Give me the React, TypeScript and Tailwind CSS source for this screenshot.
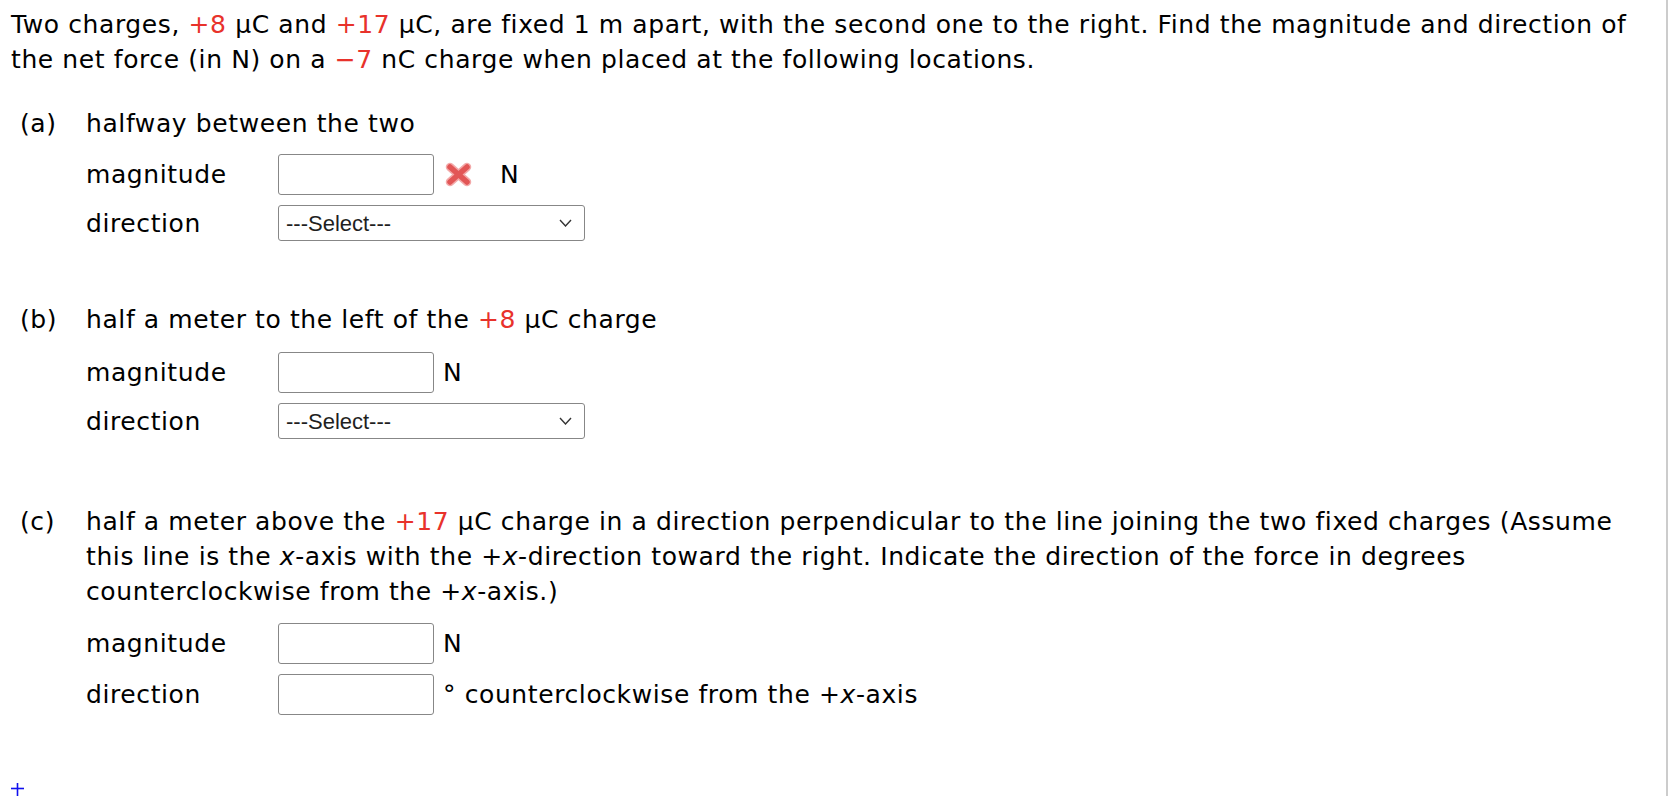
import React from 'react'

function Red({ children }: { children: React.ReactNode }): React.JSX.Element {
  return <span className="text-[#e8322b]">{children}</span>
}

function XMark(): React.JSX.Element {
  return (
    <svg width="27" height="25" viewBox="0 0 27 25" className="ml-[11px] shrink-0">
      <g strokeLinecap="round">
        <g stroke="#f3a9a9" strokeWidth="8.5">
          <line x1="5" y1="5" x2="22" y2="20" />
          <line x1="22" y1="5" x2="5" y2="20" />
        </g>
        <g stroke="#e25656" strokeWidth="5.5">
          <line x1="5" y1="5" x2="22" y2="20" />
          <line x1="22" y1="5" x2="5" y2="20" />
        </g>
      </g>
    </svg>
  )
}

function TextBox(): React.JSX.Element {
  return (
    <input
      type="text"
      className="w-[156px] h-[41px] shrink-0 border-[1.5px] border-[#878787] rounded-[3px] bg-white outline-none"
    />
  )
}

function SelectBox(): React.JSX.Element {
  return (
    <div className="relative w-[307px] h-[36px] shrink-0">
      <select className="w-full h-full appearance-none border-[1.5px] border-[#878787] rounded-[3px] bg-white pl-[7px] font-['Liberation_Sans',Arial,sans-serif] text-[22px] tracking-normal text-[#1f1f1f] outline-none">
        <option>---Select---</option>
      </select>
      <svg
        width="13"
        height="8"
        viewBox="0 0 13 8"
        className="absolute right-[13px] top-[14px] pointer-events-none"
      >
        <polyline points="1,1 6.5,7 12,1" fill="none" stroke="#333" strokeWidth="1.4" />
      </svg>
    </div>
  )
}

function Row({
  label,
  children,
  className
}: {
  label: string
  children: React.ReactNode
  className: string
}): React.JSX.Element {
  return (
    <div className={`flex items-center leading-[35px] ${className}`}>
      <span className="w-[192px] shrink-0">{label}</span>
      {children}
    </div>
  )
}

function Part({
  tag,
  className,
  children
}: {
  tag: string
  className: string
  children: React.ReactNode
}): React.JSX.Element {
  return (
    <section className={`flex ${className}`}>
      <div className="w-[66px] shrink-0 leading-[35px]">{tag}</div>
      <div className="flex-1">{children}</div>
    </section>
  )
}

export default function App(): React.JSX.Element {
  return (
    <div className="w-[1668px] h-[796px] overflow-hidden bg-white border-r-2 border-[#cccccc] font-['DejaVu_Sans',Verdana,sans-serif] text-[25px] tracking-[0.6px] text-black">
      <p className="pt-[7px] pl-[11px] leading-[35px] whitespace-nowrap">
        Two charges, <Red>+8</Red> μC and <Red>+17</Red> μC, are fixed 1 m apart, with the second
        one to the right. Find the magnitude and direction of
        <br />
        the net force (in N) on a <Red>−7</Red> nC charge when placed at the following locations.
      </p>

      <div className="pl-[20px]">
        <Part tag="(a)" className="mt-[29px]">
          <p className="leading-[35px]">halfway between the two</p>
          <Row label="magnitude" className="mt-[13px] h-[41px]">
            <TextBox />
            <XMark />
            <span className="ml-[28px]">N</span>
          </Row>
          <Row label="direction" className="mt-[10px] h-[36px]">
            <SelectBox />
          </Row>
        </Part>

        <Part tag="(b)" className="mt-[61px]">
          <p className="leading-[35px]">
            half a meter to the left of the <Red>+8</Red> μC charge
          </p>
          <Row label="magnitude" className="mt-[15px] h-[41px]">
            <TextBox />
            <span className="ml-[9px]">N</span>
          </Row>
          <Row label="direction" className="mt-[10px] h-[36px]">
            <SelectBox />
          </Row>
        </Part>

        <Part tag="(c)" className="mt-[65px]">
          <p className="leading-[35px] whitespace-nowrap">
            half a meter above the <Red>+17</Red> μC charge in a direction perpendicular to the line
            joining the two fixed charges (Assume
            <br />
            this line is the <i>x</i>-axis with the +<i>x</i>-direction toward the right. Indicate
            the direction of the force in degrees
            <br />
            counterclockwise from the +<i>x</i>-axis.)
          </p>
          <Row label="magnitude" className="mt-[14px] h-[41px]">
            <TextBox />
            <span className="ml-[9px]">N</span>
          </Row>
          <Row label="direction" className="mt-[10px] h-[41px]">
            <TextBox />
            <span className="ml-[9px]">° counterclockwise from the +<i>x</i>-axis</span>
          </Row>
        </Part>
      </div>

      <div className="mt-[68px] pl-[11px]">
        <svg width="13" height="13" viewBox="0 0 13 13" className="block">
          <line x1="6.5" y1="0" x2="6.5" y2="13" stroke="#1010ee" strokeWidth="1.6" />
          <line x1="0" y1="5.5" x2="13" y2="5.5" stroke="#1010ee" strokeWidth="1.6" />
        </svg>
      </div>
    </div>
  )
}
